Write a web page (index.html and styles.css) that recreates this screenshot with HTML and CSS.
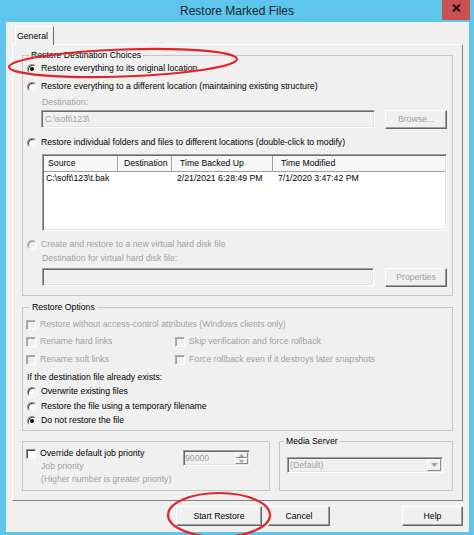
FILE: index.html
```html
<!DOCTYPE html>
<html>
<head>
<meta charset="utf-8">
<link rel="stylesheet" href="styles.css">
</head>
<body>
<div class="window">
  <div class="titlebar">
    <div class="title">Restore Marked Files</div>
    <div class="close">
      <svg width="9" height="8" viewBox="0 0 9 8"><path d="M1 0.5 L8 7.5 M8 0.5 L1 7.5" stroke="#2a1414" stroke-width="2" fill="none"/></svg>
    </div>
  </div>
  <div class="client">
    <div class="tabs"><div class="tab">General</div></div>
    <div class="panel">
      <fieldset class="group g1">
        <legend>Restore Destination Choices</legend>
        <div class="row r1"><span class="radio on"></span>Restore everything to its original location</div>
        <div class="row r2"><span class="radio"></span>Restore everything to a different location (maintaining existing structure)</div>
        <div class="row sub-label dis l1">Destination:</div>
        <div class="field-row f1">
          <div class="input w1 dis">C:\soft\123\</div>
          <div class="btn btn-side dis">Browse...</div>
        </div>
        <div class="row r3"><span class="radio"></span>Restore individual folders and files to different locations (double-click to modify)</div>
        <div class="list">
          <div class="lhead">
            <div class="hc c1">Source</div>
            <div class="hc c2">Destination</div>
            <div class="hc c3">Time Backed Up</div>
            <div class="hc c4">Time Modified</div>
          </div>
          <div class="lrow">
            <div class="rc c1">C:\soft\123\t.bak</div>
            <div class="rc c2"></div>
            <div class="rc c3">2/21/2021 6:28:49 PM</div>
            <div class="rc c4">7/1/2020 3:47:42 PM</div>
          </div>
        </div>
        <div class="row r4 dis"><span class="radio off"></span>Create and restore to a new virtual hard disk file</div>
        <div class="row sub-label dis l2">Destination for virtual hard disk file:</div>
        <div class="field-row f2">
          <div class="input w2"></div>
          <div class="btn btn-side dis">Properties</div>
        </div>
      </fieldset>

      <fieldset class="group g2">
        <legend>Restore Options</legend>
        <div class="row o1 dis"><span class="check off"></span>Restore without access-control attributes (Windows clients only)</div>
        <div class="cb-grid o2">
          <div class="row dis"><span class="check off"></span>Rename hard links</div>
          <div class="row dis"><span class="check off"></span>Skip verification and force rollback</div>
        </div>
        <div class="cb-grid o3">
          <div class="row dis"><span class="check off"></span>Rename soft links</div>
          <div class="row dis"><span class="check off"></span>Force rollback even if it destroys later snapshots</div>
        </div>
        <div class="row o4 plain">If the destination file already exists:</div>
        <div class="row o5"><span class="radio"></span>Overwrite existing files</div>
        <div class="row o6"><span class="radio"></span>Restore the file using a temporary filename</div>
        <div class="row o7"><span class="radio on"></span>Do not restore the file</div>
      </fieldset>

      <div class="bottom-row">
        <div class="prio-box">
          <div class="prio-text">
            <div class="row"><span class="check"></span>Override default job priority</div>
            <div class="row dis ind">Job priority</div>
            <div class="row dis ind">(Higher number is greater priority)</div>
          </div>
          <div class="spin">
            <span class="spin-val dis">90000</span>
            <div class="spin-btns">
              <div class="sb"><svg width="5" height="3" viewBox="0 0 5 3"><path d="M0 3 L2.5 0 L5 3 Z" fill="#a0a0a0"/></svg></div>
              <div class="sb"><svg width="5" height="3" viewBox="0 0 5 3"><path d="M0 0 L2.5 3 L5 0 Z" fill="#a0a0a0"/></svg></div>
            </div>
          </div>
        </div>
        <fieldset class="group media">
          <legend>Media Server</legend>
          <div class="combo">
            <span class="combo-val dis">(Default)</span>
            <div class="combo-btn"><svg width="7" height="4" viewBox="0 0 7 4"><path d="M0 0 L3.5 4 L7 0 Z" fill="#a0a0a0"/></svg></div>
          </div>
        </fieldset>
      </div>
    </div>
    <div class="buttons">
      <div class="btn b-start">Start Restore</div>
      <div class="btn b-cancel">Cancel</div>
      <div class="btn b-help">Help</div>
    </div>
  </div>
  <svg class="marks" width="474" height="535" viewBox="0 0 474 535">
    <ellipse cx="123" cy="63" rx="114" ry="13.5" transform="rotate(-2 123 63)" fill="none" stroke="#e0262a" stroke-width="2.2"/>
    <ellipse cx="219" cy="515" rx="51" ry="22" fill="none" stroke="#e0262a" stroke-width="2.2"/>
  </svg>
</div>
</body>
</html>
```
FILE: styles.css
```css
body {
  margin: 0;
}

.window {
  width: 474px;
  height: 535px;
  background: #5ec5eb;
  display: flex;
  flex-direction: column;
  position: relative;
  overflow: hidden;
  font-family: "Liberation Sans", Arial, sans-serif;
  font-size: 8.7px;
  color: #000;
}

.titlebar {
  height: 22px;
  display: flex;
  align-items: flex-start;
  flex: none;
}

.title {
  flex: 1;
  text-align: center;
  padding-left: 32px;
  font-size: 12px;
  line-height: 22px;
  color: #17252e;
}

.close {
  width: 28px;
  height: 20px;
  margin-right: 4px;
  background: #c75050;
  display: flex;
  justify-content: center;
  align-items: flex-start;
  padding-top: 4px;
  box-sizing: border-box;
}

.client {
  flex: 1;
  margin: 0 5px 3px 6px;
  background: #f0f0f0;
  display: flex;
  flex-direction: column;
}

.tabs {
  display: flex;
  padding: 4px 0 0 9px;
}

.tab {
  width: 39px;
  height: 19px;
  box-sizing: border-box;
  border-top: 1px solid #fff;
  border-left: 1px solid #fff;
  border-right: 1px solid #696969;
  background: #f0f0f0;
  margin-bottom: -1px;
  position: relative;
  z-index: 1;
  padding: 1px 0 0 1px;
  line-height: 17px;
}

.panel {
  margin: 0 6px;
  border: 1px solid;
  border-color: #fff #7f7f7f #7f7f7f #fff;
  padding: 5px 9px 9px 9px;
}

.group {
  margin: 0;
  padding: 0 0 0 4px;
  border: 1px solid #c6c6c6;
  min-inline-size: 0;
}

.group legend {
  padding: 0 2px;
  margin-left: 0;
  line-height: 11px;
  color: #000;
}

.row {
  display: flex;
  align-items: center;
  height: 13px;
  line-height: 13px;
  white-space: nowrap;
}

.dis {
  color: #a0a0a0;
}

.radio {
  flex: none;
  width: 10px;
  height: 10px;
  box-sizing: border-box;
  border-radius: 50%;
  border: 1px solid;
  border-color: #8a8a8a #fff #fff #8a8a8a;
  box-shadow: inset 1px 1px 0 #4a4a4a, inset -1px -1px 0 #e3e3e3;
  background: #fff;
  margin-right: 4px;
  display: flex;
  justify-content: center;
  align-items: center;
}

.radio.on::after {
  content: "";
  width: 4px;
  height: 4px;
  border-radius: 50%;
  background: #000;
}

.radio.off {
  background: #f0f0f0;
  border-color: #b0b0b0 #fff #fff #b0b0b0;
  box-shadow: inset 1px 1px 0 #a0a0a0;
}

.check {
  flex: none;
  width: 10px;
  height: 10px;
  box-sizing: border-box;
  border: 1px solid;
  border-color: #8a8a8a #fff #fff #8a8a8a;
  box-shadow: inset 1px 1px 0 #4a4a4a;
  background: #fff;
  margin: 0 4px 0 0;
}

.check.off {
  background: #f0f0f0;
  border-color: #b0b0b0 #fff #fff #b0b0b0;
  box-shadow: inset 1px 1px 0 #a0a0a0;
}

/* group 1 vertical rhythm */
.g1 {
  padding-bottom: 8px;
}
.g1 legend {
  margin-left: 2px;
}
.r1 { margin-top: 1px; }
.r2 { margin-top: 5px; }
.l1 { margin-top: 3px; padding-left: 15px; }
.f1 { margin-top: 1px; }
.r3 { margin-top: 7px; }
.r4 { margin-top: 7px; }
.l2 { margin-top: 1px; padding-left: 15px; }
.f2 { margin-top: 3px; }

.field-row {
  display: flex;
  height: 19px;
  margin-left: 14px;
}

.input {
  height: 18px;
  box-sizing: border-box;
  border: 1px solid;
  border-color: #a0a0a0 #fff #fff #a0a0a0;
  box-shadow: inset 1px 1px 0 #696969, inset -1px -1px 0 #e3e3e3;
  background: #f0f0f0;
  padding-left: 3px;
  line-height: 16px;
}

.w1 { width: 334px; }
.w2 { width: 332px; margin-left: 1px; }

.btn {
  box-sizing: border-box;
  height: 19px;
  border: 1px solid;
  border-color: #fff #646464 #646464 #fff;
  box-shadow: inset -1px -1px 0 #a0a0a0;
  background: #f0f0f0;
  text-align: center;
  line-height: 17px;
  white-space: nowrap;
}

.btn-side {
  width: 62px;
  margin-left: auto;
  margin-right: 5px;
}

.list {
  margin: 5px 5px 0 15px;
  height: 77px;
  box-sizing: border-box;
  border: 1px solid;
  border-color: #a0a0a0 #fff #fff #a0a0a0;
  box-shadow: inset 1px 1px 0 #696969, inset -1px -1px 0 #e3e3e3;
  background: #fff;
  padding: 1px 1px 1px 1px;
}

.lhead {
  display: flex;
  height: 16px;
  background: #f7f7f7;
  border-bottom: 1px solid #a0a0a0;
  box-sizing: border-box;
}

.hc {
  box-sizing: border-box;
  border-right: 1px solid #a0a0a0;
  border-left: 1px solid #fff;
  line-height: 15px;
  white-space: nowrap;
  padding-left: 3px;
}

.hc.c2 { padding-left: 5px; }
.hc.c3 { padding-left: 7px; }
.hc.c4 { padding-left: 7px; border-right: none; flex: 1; }

.c1 { width: 74px; }
.c2 { width: 54px; }
.c3 { width: 101px; }
.c4 { flex: 1; }

.lrow {
  display: flex;
  height: 13px;
  line-height: 13px;
  white-space: nowrap;
}

.rc.c1 { padding-left: 2px; box-sizing: border-box; }
.rc.c3 { padding-left: 5px; box-sizing: border-box; }
.rc.c4 { padding-left: 5px; }

/* group 2 */
.g2 {
  margin-top: 6px;
  padding-bottom: 3px;
}
.g2 legend {
  margin-left: 3px;
}
.g2 .check { margin-left: -1px; }
.o1 { margin-top: 5px; }
.o2 { margin-top: 4px; }
.o3 { margin-top: 5px; }
.o4 { margin-top: 5px; }
.o5 { margin-top: 1px; }
.o6 { margin-top: 2px; }
.o7 { margin-top: 1px; }

.cb-grid {
  display: grid;
  grid-template-columns: 149px 1fr;
}

/* bottom */
.bottom-row {
  display: flex;
  margin-top: 5px;
  height: 55px;
}

.prio-box {
  width: 248px;
  height: 50px;
  margin-top: 5px;
  box-sizing: border-box;
  border: 1px solid #c6c6c6;
  padding: 5px 0 0 4px;
  display: grid;
  grid-template-columns: 156px 67px;
  align-items: start;
}

.prio-text .check { margin-left: -1px; }
.ind { padding-left: 14px; }

.spin {
  margin-top: 3px;
  height: 16px;
  box-sizing: border-box;
  border: 1px solid;
  border-color: #a0a0a0 #fff #fff #a0a0a0;
  box-shadow: inset 1px 1px 0 #696969, inset -1px -1px 0 #e3e3e3;
  background: #f0f0f0;
  display: flex;
}

.spin-val {
  flex: 1;
  line-height: 14px;
  padding-left: 1px;
}

.spin-btns {
  width: 13px;
  display: flex;
  flex-direction: column;
  padding: 1px 1px 1px 0;
}

.sb {
  flex: 1;
  box-sizing: border-box;
  border: 1px solid;
  border-color: #fff #8a8a8a #8a8a8a #fff;
  background: #f0f0f0;
  display: flex;
  justify-content: center;
  align-items: center;
}

.media {
  flex: 1;
  margin-left: 9px;
  height: 55px;
  box-sizing: border-box;
  padding: 0;
}

.media legend {
  margin-left: 4px;
}

.combo {
  margin: 10px 0 0 7px;
  width: 156px;
  height: 16px;
  box-sizing: border-box;
  border: 1px solid;
  border-color: #a0a0a0 #fff #fff #a0a0a0;
  box-shadow: inset 1px 1px 0 #696969, inset -1px -1px 0 #e3e3e3;
  background: #f0f0f0;
  display: flex;
}

.combo-val {
  flex: 1;
  line-height: 14px;
  padding-left: 2px;
}

.combo-btn {
  width: 14px;
  margin: 1px 1px 1px 0;
  box-sizing: border-box;
  border: 1px solid;
  border-color: #fff #8a8a8a #8a8a8a #fff;
  display: flex;
  justify-content: center;
  align-items: center;
}

/* dialog buttons */
.buttons {
  display: flex;
  margin-top: 5px;
  padding: 0 6px 0 170px;
}

.buttons .btn {
  height: 20px;
  line-height: 18px;
}

.b-start { width: 86px; }
.b-cancel { width: 62px; margin-left: 6px; }
.b-help { width: 61px; margin-left: auto; }

.marks {
  position: absolute;
  left: 0;
  top: 0;
  pointer-events: none;
}
```
